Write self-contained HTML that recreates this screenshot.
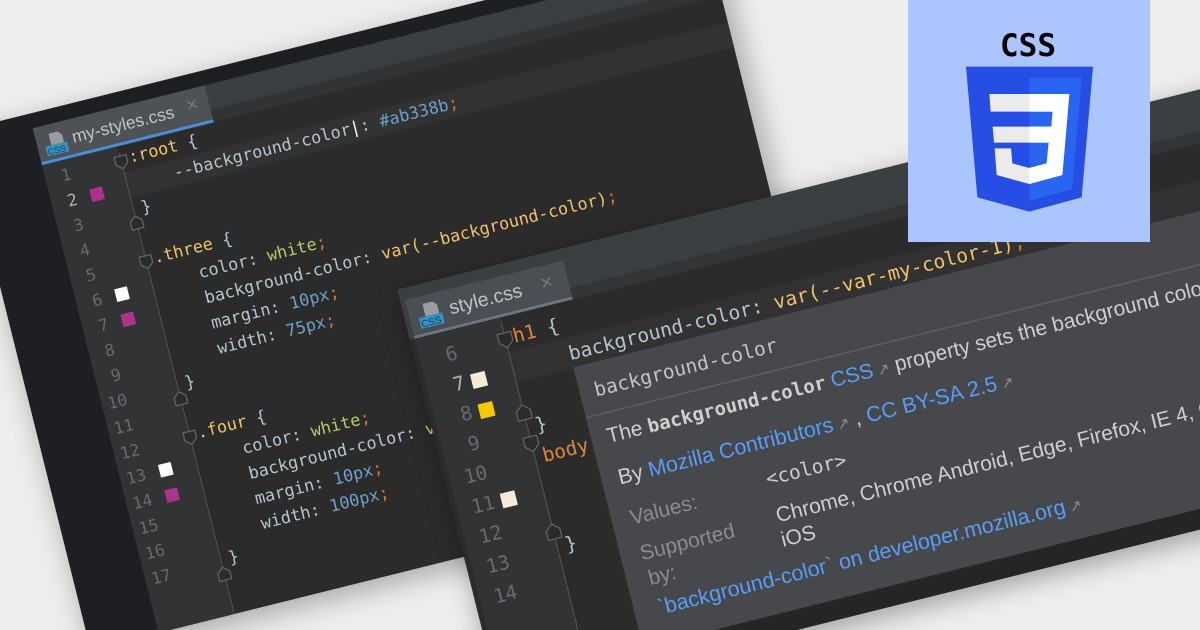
<!DOCTYPE html>
<html><head><meta charset="utf-8"><style>
html,body{margin:0;padding:0;background:#ededed;overflow:hidden;width:1200px;height:630px;}
svg{display:block}
.m{font-family:"DejaVu Sans Mono","Liberation Mono",monospace;}
.s{font-family:"Liberation Sans","DejaVu Sans",sans-serif;}
</style></head><body>
<svg width="1200" height="630" viewBox="0 0 1200 630" xmlns="http://www.w3.org/2000/svg">
<defs>
<filter id="sh" x="-20%" y="-20%" width="140%" height="140%"><feGaussianBlur stdDeviation="12"/></filter>
<clipPath id="rh"><rect x="388" y="0" width="300" height="700"/></clipPath>
</defs>
<rect width="1200" height="630" fill="#ededed"/>

<!-- WINDOW 1 -->
<g transform="translate(0,121) rotate(-14)">
  <rect x="-40" y="6" width="780" height="540" fill="#000" opacity="0.25" filter="url(#sh)"/>
  <rect x="-40" y="0" width="770" height="535" fill="#1e1f22"/>
  <rect x="30" y="15" width="700" height="38" fill="#3c3f41"/>
  <rect x="207" y="40" width="523" height="13" fill="#323335"/>
  <rect x="30" y="53" width="700" height="482" fill="#2b2b2b"/>
  <rect x="30" y="53" width="77" height="482" fill="#313335"/>
  <rect x="107" y="80" width="623" height="26" fill="#323232"/>
  <rect x="30" y="15" width="177" height="35" fill="#4e5254"/>
  <rect x="30" y="50" width="177" height="3" fill="#4a8fd6"/>
  <path d="M44 24 h9 l4 4 v8 h-13z" fill="#9a9da0"/>
  <rect x="38" y="36" width="22" height="10" fill="#3592c4"/>
  <text x="39" y="45" class="s" font-size="9" fill="#1c3d55">CSS</text>
  <text x="66" y="39" class="s" font-size="17.5" fill="#c4c4c4">my-styles.css</text>
  <text x="184" y="36" class="s" font-size="15" fill="#777">✕</text>
  <line x1="108" y1="60" x2="108" y2="535" stroke="#555" stroke-width="1"/>
  <g fill="#2b2b2b" stroke="#666" stroke-width="1.2">
    <path d="M102 63 h12 v8 l-6 5 l-6 -5z"/>
    <path d="M102 130 l6 -5 l6 5 v8 h-12z"/>
    <path d="M102 166 h12 v8 l-6 5 l-6 -5z"/>
    <path d="M102 311 l6 -5 l6 5 v8 h-12z"/>
    <path d="M102 347 h12 v8 l-6 5 l-6 -5z"/>
    <path d="M102 492 l6 -5 l6 5 v8 h-12z"/>
  </g>
  <g class="m" font-size="16.5" fill="#686b6e" text-anchor="end">
    <text x="56" y="74">1</text><text x="56" y="99.8" fill="#b4b3b3">2</text><text x="56" y="125.6">3</text>
    <text x="56" y="151.4">4</text><text x="56" y="177.2">5</text><text x="56" y="203">6</text>
    <text x="56" y="228.8">7</text><text x="56" y="254.6">8</text><text x="56" y="280.4">9</text>
    <text x="56" y="306.2">10</text><text x="56" y="332">11</text><text x="56" y="357.8">12</text>
    <text x="56" y="383.6">13</text><text x="56" y="409.4">14</text><text x="56" y="435.2">15</text>
    <text x="56" y="461">16</text><text x="56" y="486.8">17</text>
  </g>
  <rect x="70" y="88" width="13" height="13" fill="#ab338b"/>
  <rect x="70" y="191" width="13" height="13" fill="#ffffff"/>
  <rect x="70" y="217" width="13" height="13" fill="#ab338b"/>
  <rect x="70" y="372" width="13" height="13" fill="#ffffff"/>
  <rect x="70" y="398" width="13" height="13" fill="#ab338b"/>
  <g class="m" font-size="16.8" fill="#b8c4d0">
    <text x="116" y="72"><tspan fill="#f0c46a">:root</tspan> {</text>
    <text x="156" y="98">--background-color<tspan fill="#fff">|</tspan>: <tspan fill="#6fa0cc">#ab338b</tspan><tspan fill="#cc7832">;</tspan></text>
    <text x="116" y="124">}</text>
    <text x="116" y="175.5"><tspan fill="#f0c46a">.three</tspan> {</text>
    <text x="156" y="201">color: <tspan fill="#b3cf5f">white</tspan><tspan fill="#cc7832">;</tspan></text>
    <text x="156" y="227">background-color: <tspan fill="#f0c46a">var(--background-color)</tspan><tspan fill="#cc7832">;</tspan></text>
    <text x="156" y="253">margin: <tspan fill="#6fa0cc">10px</tspan><tspan fill="#cc7832">;</tspan></text>
    <text x="156" y="279">width: <tspan fill="#6fa0cc">75px</tspan><tspan fill="#cc7832">;</tspan></text>
    <text x="116" y="304.5">}</text>
    <text x="116" y="356"><tspan fill="#f0c46a">.four</tspan> {</text>
    <text x="156" y="382">color: <tspan fill="#b3cf5f">white</tspan><tspan fill="#cc7832">;</tspan></text>
    <text x="156" y="408">background-color: <tspan fill="#f0c46a">var(--background-color)</tspan><tspan fill="#cc7832">;</tspan></text>
    <text x="156" y="434">margin: <tspan fill="#6fa0cc">10px</tspan><tspan fill="#cc7832">;</tspan></text>
    <text x="156" y="459.5">width: <tspan fill="#6fa0cc">100px</tspan><tspan fill="#cc7832">;</tspan></text>
    <text x="116" y="485">}</text>
  </g>
</g>

<!-- WINDOW 2 -->
<g transform="translate(405,300) rotate(-14)">
  <rect x="-5" y="-6" width="910" height="430" fill="#000" opacity="0.3" filter="url(#sh)"/>
  <rect x="-5" y="-12" width="905" height="427" fill="#2b2b2b"/>
  <rect x="-5" y="-12" width="905" height="52" fill="#3c3f41"/>
  <rect x="163" y="28" width="737" height="12" fill="#333537"/>
  <rect x="0" y="0" width="163" height="37" fill="#4b4e52"/>
  <rect x="0" y="37" width="163" height="3" fill="#6b7682"/>
  <rect x="0" y="40" width="88" height="375" fill="#313335"/>
  <rect x="88" y="76" width="812" height="31" fill="#323232"/>
  <path d="M16 8 h10 l4 4 v9 h-14z" fill="#9a9da0"/>
  <rect x="9" y="21" width="24" height="11" fill="#3592c4"/>
  <text x="10" y="31" class="s" font-size="10" fill="#1c3d55">CSS</text>
  <text x="41" y="25" class="s" font-size="19.5" fill="#c4c4c4">style.css</text>
  <text x="135" y="23" class="s" font-size="16" fill="#777">✕</text>
  <line x1="88" y1="44" x2="88" y2="415" stroke="#555"/>
  <g fill="#2b2b2b" stroke="#666" stroke-width="1.2">
    <path d="M81 56 h14 v9 l-7 6 l-7 -6z"/>
    <path d="M81 136 l7 -6 l7 6 v9 h-14z"/>
    <path d="M81 163 h14 v9 l-7 6 l-7 -6z"/>
    <path d="M81 259 l7 -6 l7 6 v9 h-14z"/>
  </g>
  <g class="m" font-size="19.5" fill="#686b6e" text-anchor="end">
    <text x="38" y="70">6</text><text x="38" y="100.8" fill="#b4b3b3">7</text><text x="38" y="131.6">8</text>
    <text x="38" y="162.4">9</text><text x="38" y="193.2">10</text><text x="38" y="224">11</text>
    <text x="38" y="254.8">12</text><text x="38" y="285.6">13</text><text x="38" y="316.4">14</text>
  </g>
  <rect x="45" y="88" width="15" height="15" fill="#f8ead8"/>
  <rect x="45" y="119" width="15" height="15" fill="#f5c800"/>
  <rect x="45" y="211" width="15" height="15" fill="#f8ead8"/>
  <g class="m" font-size="19.5" fill="#b8c4d0">
    <text x="96" y="68"><tspan fill="#e0883a">h1</tspan> {</text>
    <text x="146" y="98.5">background-color: <tspan fill="#f0c46a">var(--var-my-color-1)</tspan><tspan fill="#cc7832">;</tspan></text>
    <text x="96" y="160">}</text>
    <text x="96" y="191"><tspan fill="#e0883a">body</tspan> {</text>
    <text x="96" y="283">}</text>
  </g>
  <rect x="147" y="106" width="800" height="289" fill="#46484b"/>
  <rect x="147" y="395" width="800" height="20" fill="#252526"/>
  <line x1="147" y1="158" x2="947" y2="158" stroke="#5c5e61" stroke-width="1.5"/>
  <text x="162" y="140" class="m" font-size="19.5" fill="#c4c4c4">background-color</text>
  <text x="163" y="188" class="s" font-size="21" fill="#cfcfcf">The <tspan class="m" font-weight="bold" font-size="19">background-color</tspan> <tspan fill="#589df6">CSS</tspan><tspan fill="#8a8c8f" font-size="15"> ↗</tspan>  property sets the background color of an element.</text>
  <text x="164" y="231" class="s" font-size="21.5" fill="#cfcfcf">By <tspan fill="#589df6">Mozilla Contributors</tspan><tspan fill="#8a8c8f" font-size="15"> ↗</tspan> , <tspan fill="#589df6">CC BY-SA 2.5</tspan><tspan fill="#8a8c8f" font-size="15"> ↗</tspan></text>
  <text x="166" y="273" class="s" font-size="21" fill="#8c8c8c">Values:</text>
  <text x="307" y="268" class="m" font-size="19.5" fill="#cfcfcf">&lt;color&gt;</text>
  <text x="167" y="310" class="s" font-size="21" fill="#8c8c8c">Supported</text>
  <text x="169" y="336" class="s" font-size="21" fill="#8c8c8c">by:</text>
  <text x="308" y="306" class="s" font-size="21" fill="#cfcfcf">Chrome, Chrome Android, Edge, Firefox, IE 4, Opera, Safari</text>
  <text x="307" y="331" class="s" font-size="21" fill="#cfcfcf">iOS</text>
  <text x="171" y="367" class="s" font-size="21.5" fill="#589df6">`background-color` on developer.mozilla.org<tspan fill="#8a8c8f" font-size="15"> ↗</tspan></text>
</g>

<!-- CSS LOGO -->
<rect x="908" y="0" width="242" height="242" fill="#abc6ff"/>
<text x="1028" y="56" text-anchor="middle" font-family="DejaVu Sans Mono, monospace" font-weight="bold" font-size="31" fill="#000" letter-spacing="0">CSS</text>
<g transform="translate(900,0) scale(0.33333)">
  <polygon points="198,200 579,200 545,592 388,635 232,592" fill="#264de4"/>
  <polygon points="388,233 545,233 516,568 388,603" fill="#2965f1"/>
  <polygon points="268,282 508,282 487,525 388,552 290,525 284,445 333,445 337,490 388,504 440,490 446,428 282,428 278,380 454,380 458,335 272,335" fill="#ebebeb"/>
  <polygon points="268,282 508,282 487,525 388,552 290,525 284,445 333,445 337,490 388,504 440,490 446,428 282,428 278,380 454,380 458,335 272,335" fill="#ffffff" clip-path="url(#rh)"/>
</g>
</svg>
</body></html>
